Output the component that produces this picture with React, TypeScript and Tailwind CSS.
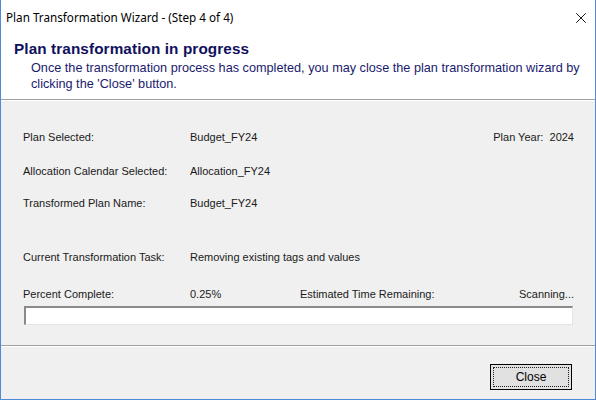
import { X } from 'lucide-react';

const body = { fontFamily: '"Liberation Sans", Arial, sans-serif' };

function Row({ label, value, right, top }: { label: string; value: string; right?: React.ReactNode; top: string }) {
  return (
    <div className={`flex items-center h-[14px] ${top}`}>
      <span className="w-[167px] shrink-0">{label}</span>
      <span className="flex-1">{value}</span>
      {right}
    </div>
  );
}

export default function App() {
  return (
    <div className="w-[596px] h-[400px] flex flex-col bg-[#f0f0f0] border-x border-b border-[#4f8ad8] text-[12px] text-black overflow-hidden" style={body}>
      <div className="bg-white">
        {/* title bar */}
        <div className="h-[36px] flex items-center justify-between pl-[5px] pr-[4px]">
          <span className="text-[11.7px] text-black" style={{ fontFamily: '"Noto Sans", "Open Sans", sans-serif' }}>
            Plan Transformation Wizard - (Step 4 of 4)
          </span>
          <X size={18} strokeWidth={1.2} className="text-black mr-[1px]" />
        </div>
        {/* wizard header */}
        <div className="h-[63px] pl-[13px] text-[#10105e]">
          <div className="text-[15.3px] font-bold leading-[18px] pt-[4px] tracking-[0.1px]">Plan transformation in progress</div>
          <div className="pl-[17px] text-[12.7px] leading-[16px] text-[#1a1a6e] mt-[2px]">
            Once the transformation process has completed, you may close the plan transformation wizard by
            <br />
            clicking the 'Close' button.
          </div>
        </div>
      </div>
      <div className="h-px bg-[#a0a0a0]" />
      <div className="h-px bg-white" />

      {/* content */}
      <div className="h-[244px] pl-[22px] pr-[21px] text-[11px] text-[#1a1a1a]">
        <Row top="mt-[29px]" label="Plan Selected:" value="Budget_FY24" right={<span>Plan Year:&nbsp; 2024</span>} />
        <Row top="mt-[20px]" label="Allocation Calendar Selected:" value="Allocation_FY24" />
        <Row top="mt-[18px]" label="Transformed Plan Name:" value="Budget_FY24" />
        <Row top="mt-[40px]" label="Current Transformation Task:" value="Removing existing tags and values" />
        <div className="flex items-center h-[14px] mt-[23px]">
          <span className="w-[167px] shrink-0">Percent Complete:</span>
          <span className="w-[110px] shrink-0">0.25%</span>
          <span className="flex-1">Estimated Time Remaining:</span>
          <span>Scanning...</span>
        </div>
        <div className="mt-[5px] mr-[1px] ml-[1px] h-[19px] bg-white border-t-2 border-l-2 border-t-[#8a8a8a] border-l-[#8a8a8a] border-b border-r border-b-[#e3e3e3] border-r-[#e3e3e3]" />
      </div>

      <div className="h-px bg-[#a0a0a0]" />
      <div className="h-px bg-white" />

      {/* footer */}
      <div className="flex-1 flex justify-end items-start pt-[17px] pr-[23px]">
        <button className="w-[82px] h-[26px] border border-black bg-[#e1e1e1] p-[2px] text-[12px] text-black">
          <div className="w-full h-full border border-dotted border-[#202020] flex items-center justify-center">
            Close
          </div>
        </button>
      </div>
    </div>
  );
}
